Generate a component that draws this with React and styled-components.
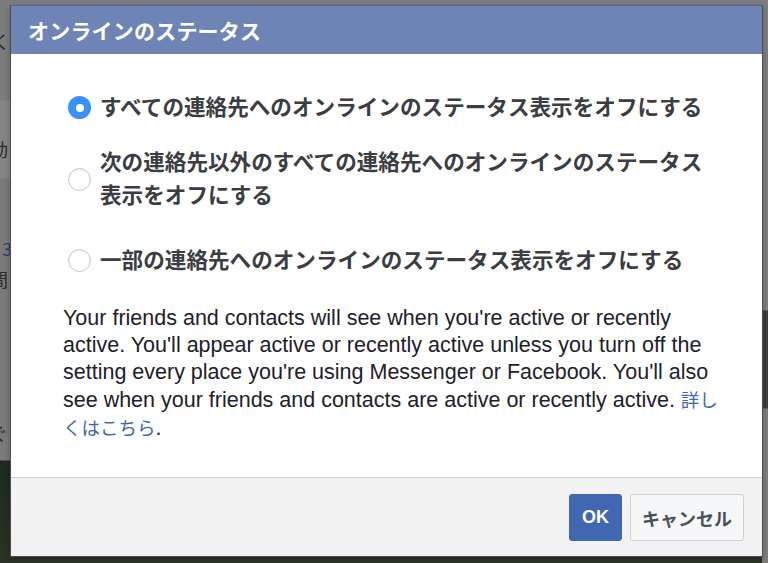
import React from "react";
import styled, { createGlobalStyle } from "styled-components";

const Global = createGlobalStyle`
  html, body { margin: 0; padding: 0; }
  body { width: 768px; height: 563px; overflow: hidden; background: #7e7e7e; }
`;

const JP = `"Liberation Sans", "Noto Sans CJK JP", sans-serif`;

const Backdrop = styled.div`
  position: relative;
  width: 768px;
  height: 563px;
  box-sizing: border-box;
  padding: 5px 0 0 10px;
  background: linear-gradient(
    to bottom,
    #7c7c7c 0px,
    #7c7c7c 100px,
    #858585 101px,
    #858585 178px,
    #7a7a7a 179px,
    #7a7a7a 460px,
    #1f2a1f 461px,
    #2a3326 563px
  );
  overflow: hidden;
`;

const BgText = styled.span`
  position: absolute;
  font-family: "Noto Sans CJK JP", sans-serif;
  font-size: 18px;
  color: ${(p) => p.$color || "#2a2a2a"};
  white-space: nowrap;
`;

const RightStrip = styled.div`
  position: absolute;
  right: 0;
  top: 0;
  width: 6px;
  height: 563px;
  background: linear-gradient(
    to bottom,
    #7e7e7e 0px,
    #7e7e7e 310px,
    #3d3d3d 311px,
    #3d3d3d 408px,
    #7e7e7e 409px,
    #7e7e7e 563px
  );
`;

const Dialog = styled.div`
  position: relative;
  width: 753px;
  box-sizing: border-box;
  border: 1px solid #4d4d4d;
  border-top-color: #4a66a0;
  background: #fff;
  display: flex;
  flex-direction: column;
  box-shadow: 0 2px 6px rgba(0, 0, 0, 0.25);
`;

const Header = styled.div`
  height: 48px;
  background: #6d84b4;
  display: flex;
  align-items: center;
  padding-left: 17px;
  font-family: ${JP};
  font-weight: 700;
  font-size: 21px;
  color: #fff;
  letter-spacing: 0.2px;
`;

const Body = styled.div`
  padding: 37px 40px 35px 52px;
`;

const Options = styled.div`
  display: flex;
  flex-direction: column;
  padding-left: 5px;
`;

const Option = styled.label`
  display: flex;
  align-items: center;
  gap: 9px;
  margin-bottom: ${(p) => p.$after}px;
  font-family: ${JP};
  font-weight: 700;
  font-size: 21.6px;
  line-height: 33px;
  color: #3b3d42;
  cursor: pointer;
`;

const Radio = styled.span`
  flex: none;
  width: 23px;
  height: 23px;
  box-sizing: border-box;
  border-radius: 50%;
  display: flex;
  align-items: center;
  justify-content: center;
  background: ${(p) => (p.$checked ? "#3b90f7" : "#fff")};
  border: ${(p) => (p.$checked ? "none" : "1.5px solid #c4c7cc")};
  box-shadow: ${(p) =>
    p.$checked ? "none" : "inset 0 1px 2px rgba(0,0,0,0.08)"};

  &::after {
    content: "";
    display: ${(p) => (p.$checked ? "block" : "none")};
    width: 8px;
    height: 8px;
    border-radius: 50%;
    background: #fff;
  }
`;

const Paragraph = styled.p`
  margin: 28px 0 0;
  font-family: "Liberation Sans", "Noto Sans CJK JP", sans-serif;
  font-size: 21.5px;
  line-height: 27px;
  color: #1d2129;
`;

const Link = styled.a`
  color: #4267b2;
  text-decoration: none;
  font-family: "Noto Sans CJK JP", sans-serif;
  font-size: 18.5px;
`;

const Footer = styled.div`
  border-top: 1px solid #ccd0d5;
  background: #f2f2f2;
  padding: 16px 18px 15px;
  display: flex;
  justify-content: flex-end;
  gap: 8px;
`;

const Button = styled.button`
  height: 47px;
  box-sizing: border-box;
  padding: 0 ${(p) => (p.$primary ? "12px" : "11px")};
  border-radius: 3px;
  border: 1px solid ${(p) => (p.$primary ? "#4267b2" : "#ced0d4")};
  background: ${(p) => (p.$primary ? "#4267b2" : "#f6f7f9")};
  color: ${(p) => (p.$primary ? "#fff" : "#4b4f56")};
  font-family: ${JP};
  font-weight: 700;
  font-size: 18px;
  cursor: pointer;
  min-width: ${(p) => (p.$primary ? "53px" : "114px")};
`;

export default function App() {
  return (
    <>
      <Global />
      <Backdrop>
        <BgText style={{ left: -8, top: 28 }}>く</BgText>
        <BgText style={{ left: -10, top: 136 }}>動</BgText>
        <BgText style={{ left: 2, top: 235 }} $color="#2b3f7a">3</BgText>
        <BgText style={{ left: -10, top: 266 }}>間</BgText>
        <BgText style={{ left: -10, top: 420 }}>ぐ</BgText>
        <RightStrip />
        <Dialog>
          <Header>オンラインのステータス</Header>
          <Body>
            <Options>
              <Option $after={22}>
                <Radio $checked />
                <span>すべての連絡先へのオンラインのステータス表示をオフにする</span>
              </Option>
              <Option $after={32}>
                <Radio />
                <span>
                  次の連絡先以外のすべての連絡先へのオンラインのステータス
                  <br />
                  表示をオフにする
                </span>
              </Option>
              <Option $after={0}>
                <Radio />
                <span>一部の連絡先へのオンラインのステータス表示をオフにする</span>
              </Option>
            </Options>
            <Paragraph>
              Your friends and contacts will see when you're active or recently
              active. You'll appear active or recently active unless you turn off
              the setting every place you're using Messenger or Facebook. You'll
              also see when your friends and contacts are active or recently
              active. <Link href="#">詳しくはこちら</Link>.
            </Paragraph>
          </Body>
          <Footer>
            <Button $primary>OK</Button>
            <Button>キャンセル</Button>
          </Footer>
        </Dialog>
      </Backdrop>
    </>
  );
}
